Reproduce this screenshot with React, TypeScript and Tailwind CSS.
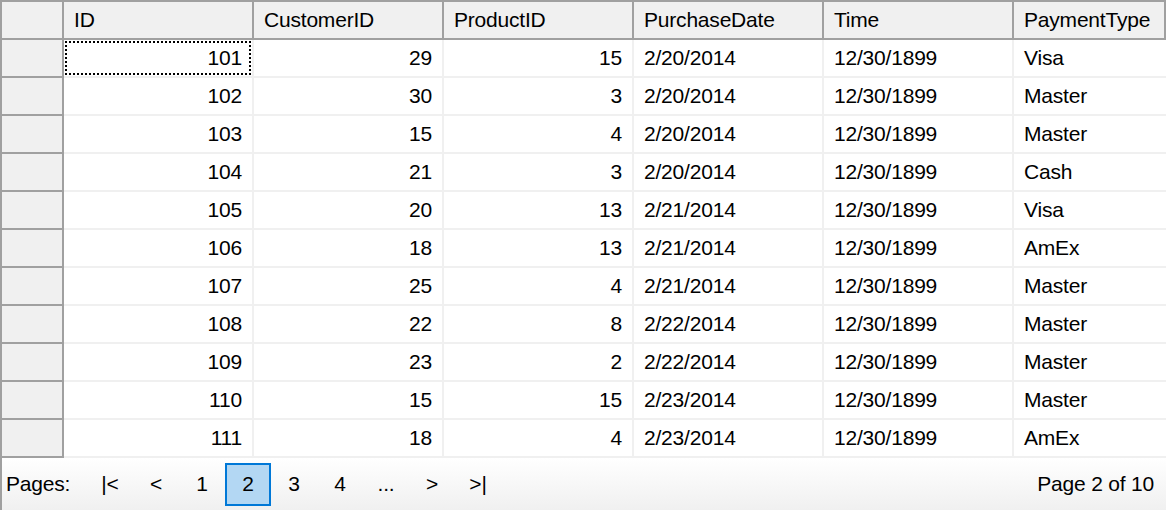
import React from "react";

const rows = [
  [101, 29, 15, "2/20/2014", "Visa"],
  [102, 30, 3, "2/20/2014", "Master"],
  [103, 15, 4, "2/20/2014", "Master"],
  [104, 21, 3, "2/20/2014", "Cash"],
  [105, 20, 13, "2/21/2014", "Visa"],
  [106, 18, 13, "2/21/2014", "AmEx"],
  [107, 25, 4, "2/21/2014", "Master"],
  [108, 22, 8, "2/22/2014", "Master"],
  [109, 23, 2, "2/22/2014", "Master"],
  [110, 15, 15, "2/23/2014", "Master"],
  [111, 18, 4, "2/23/2014", "AmEx"],
];

const heads = ["ID", "CustomerID", "ProductID", "PurchaseDate", "Time", "PaymentType"];
const cols = "grid-cols-[62px_190px_190px_190px_190px_190px_152px]";

export default function App() {
  return (
    <div className="w-[1166px] h-[510px] overflow-hidden bg-white text-[21px] text-black border-l-2 border-t-2 border-[#a0a0a0]" style={{ fontFamily: '"Liberation Sans", Arial, sans-serif', letterSpacing: "-0.2px" }}>
      <div className={`grid ${cols} h-[38px] bg-[#f0f0f0] border-b-2 border-[#a0a0a0]`}>
        <div className="border-r-2 border-[#a0a0a0]" />
        {heads.map((h) => (
          <div key={h} className="border-r-2 border-[#a0a0a0] px-2.5 flex items-center">{h}</div>
        ))}
      </div>
      {rows.map((r, i) => (
        <div key={i} className={`grid ${cols} h-[38px]`}>
          <div className="bg-[#f0f0f0] border-r-2 border-b-2 border-[#a0a0a0]" />
          {[r[0], r[1], r[2]].map((v, j) => (
            <div key={j} className="border-r-2 border-b-2 border-[#f0f0f0] flex items-center justify-end px-2.5 relative">
              {i === 0 && j === 0 && <div className="absolute inset-[1px] border-2 border-dotted border-black" />}
              {v}
            </div>
          ))}
          <div className="border-r-2 border-b-2 border-[#f0f0f0] flex items-center px-2.5">{r[3]}</div>
          <div className="border-r-2 border-b-2 border-[#f0f0f0] flex items-center px-2.5">12/30/1899</div>
          <div className="border-b-2 border-[#f0f0f0] flex items-center px-2.5">{r[4]}</div>
        </div>
      ))}
      <div className="h-[52px] bg-gradient-to-b from-white to-[#f0f0f0] flex items-center pl-1 pr-2">
        <span className="w-[81px] shrink-0">Pages:</span>
        {["|<", "<", "1", "2", "3", "4", "...", ">", ">|"].map((p) => (
          <div key={p} className={`w-[46px] h-[43px] shrink-0 flex items-center justify-center ${p === "2" ? "bg-[#b3d7f3] border-2 border-[#0078d7]" : ""}`}>{p}</div>
        ))}
        <div className="ml-auto mr-1">Page 2 of 10</div>
      </div>
    </div>
  );
}
